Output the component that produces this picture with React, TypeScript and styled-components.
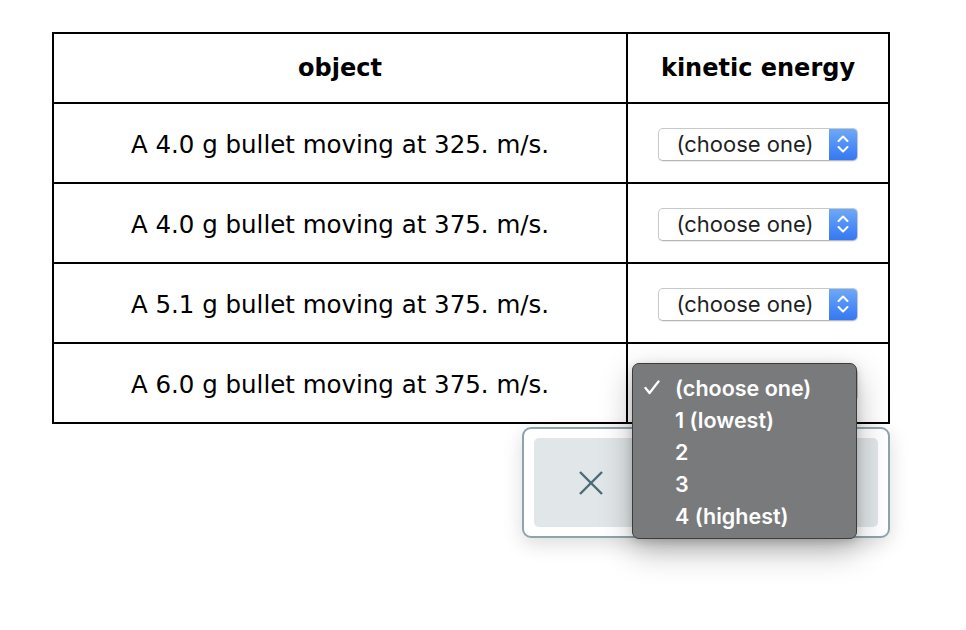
import React from "react";
import styled, { createGlobalStyle } from "styled-components";

const Global = createGlobalStyle`
  html, body { margin: 0; padding: 0; background: #ffffff; }
  body { font-family: "DejaVu Sans", Verdana, sans-serif; }
`;

const Page = styled.div`
  width: 966px;
  height: 630px;
  box-sizing: border-box;
  padding: 32px 0 0 52px;
  display: flex;
  flex-direction: column;
  align-items: flex-start;
`;

const Column = styled.div`
  display: flex;
  flex-direction: column;
  align-items: flex-end;
  width: 838px;
`;

const Table = styled.div`
  display: grid;
  grid-template-columns: 574px 262px;
  grid-template-rows: 70px repeat(4, 80px);
  border-top: 2px solid #000;
  border-left: 2px solid #000;
  width: 838px;
  box-sizing: border-box;
`;

const Cell = styled.div<{ $head?: boolean }>`
  position: relative;
  box-sizing: border-box;
  border-right: 2px solid #000;
  border-bottom: 2px solid #000;
  display: flex;
  align-items: center;
  justify-content: center;
  padding-top: ${(p) => (p.$head ? "0" : "2px")};
  font-family: "DejaVu Sans", Verdana, sans-serif;
  font-size: ${(p) => (p.$head ? "24px" : "24.5px")};
  font-weight: ${(p) => (p.$head ? 700 : 400)};
  color: #000;
`;

const SelectWrap = styled.div`
  position: relative;
  width: 200px;
  height: 33px;
`;

const SelectBox = styled.div`
  box-sizing: border-box;
  width: 200px;
  height: 33px;
  display: flex;
  align-items: stretch;
  border: 1px solid #c9c9c9;
  border-bottom-color: #b5b5b5;
  border-radius: 5px;
  background: #fff;
  box-shadow: 0 1px 1px rgba(0, 0, 0, 0.08);
  overflow: hidden;
`;

const SelectLabel = styled.div<{ $hidden?: boolean }>`
  flex: 1;
  display: flex;
  align-items: center;
  justify-content: center;
  padding-left: 2px;
  font-family: Inter, "Liberation Sans", sans-serif;
  font-size: 22px;
  color: #1f1f1f;
  visibility: ${(p) => (p.$hidden ? "hidden" : "visible")};
`;

const Stepper = styled.div`
  width: 28px;
  background: linear-gradient(#6da8f8, #3478f4);
  display: flex;
  align-items: center;
  justify-content: center;
`;

const Menu = styled.div`
  position: absolute;
  left: -26px;
  top: -5px;
  width: 225px;
  box-sizing: border-box;
  padding: 8px 0 6px;
  background: #797a7c;
  border: 1px solid #3c3c3c;
  border-radius: 7px;
  box-shadow: 0 12px 32px rgba(0, 0, 0, 0.28), 0 2px 8px rgba(0, 0, 0, 0.15);
  z-index: 10;
  display: flex;
  flex-direction: column;
`;

const MenuItem = styled.div`
  height: 32px;
  display: flex;
  align-items: center;
  font-family: Inter, "Liberation Sans", sans-serif;
  font-size: 21.5px;
  font-weight: 600;
  color: #fff;
`;

const CheckSlot = styled.div`
  width: 42px;
  display: flex;
  justify-content: flex-end;
  box-sizing: border-box;
`;

const CheckIcon = styled.svg`
  margin-right: 15px;
`;

const Card = styled.div`
  margin-top: 3px;
  width: 368px;
  height: 111px;
  box-sizing: border-box;
  border: 2px solid #8fa3ad;
  border-radius: 9px;
  background: #fff;
  padding: 9px 10px 9px 10px;
  box-shadow: 0 6px 20px rgba(0, 0, 0, 0.14);
  display: flex;
`;

const ButtonGroup = styled.div`
  flex: 1;
  display: grid;
  grid-template-columns: repeat(3, 1fr);
  background: #e1e6e9;
  border-radius: 5px;
`;

const ToolButton = styled.div`
  display: flex;
  align-items: center;
  justify-content: center;
  color: #4b6b78;
`;

const rows = [
  "A 4.0 g bullet moving at 325. m/s.",
  "A 4.0 g bullet moving at 375. m/s.",
  "A 5.1 g bullet moving at 375. m/s.",
  "A 6.0 g bullet moving at 375. m/s.",
];

const options = ["(choose one)", "1 (lowest)", "2", "3", "4 (highest)"];

function Chevrons() {
  return (
    <svg width="14" height="22" viewBox="0 0 14 22">
      <polyline points="2.5,8 7,3.5 11.5,8" fill="none" stroke="#fff" strokeWidth="2" strokeLinecap="round" strokeLinejoin="round" />
      <polyline points="2.5,14 7,18.5 11.5,14" fill="none" stroke="#fff" strokeWidth="2" strokeLinecap="round" strokeLinejoin="round" />
    </svg>
  );
}

function Select({ open }: { open?: boolean }) {
  return (
    <SelectWrap>
      <SelectBox>
        <SelectLabel $hidden={open}>(choose one)</SelectLabel>
        <Stepper>
          <Chevrons />
        </Stepper>
      </SelectBox>
      {open && (
        <Menu>
          {options.map((o, i) => (
            <MenuItem key={o}>
              <CheckSlot>
                {i === 0 && (
                  <CheckIcon width="16" height="15" viewBox="0 0 16 15">
                    <polyline points="1.5,8 5.5,13 14.5,1.5" fill="none" stroke="#fff" strokeWidth="2.3" strokeLinecap="round" strokeLinejoin="round" />
                  </CheckIcon>
                )}
              </CheckSlot>
              {o}
            </MenuItem>
          ))}
        </Menu>
      )}
    </SelectWrap>
  );
}

export default function App() {
  return (
    <>
      <Global />
      <Page>
        <Column>
          <Table>
            <Cell $head>object</Cell>
            <Cell $head>kinetic energy</Cell>
            {rows.map((r, i) => (
              <React.Fragment key={r}>
                <Cell>{r}</Cell>
                <Cell>
                  <Select open={i === 3} />
                </Cell>
              </React.Fragment>
            ))}
          </Table>
          <Card>
            <ButtonGroup>
              <ToolButton>
                <svg width="26" height="26" viewBox="0 0 26 26">
                  <line x1="2" y1="2" x2="24" y2="24" stroke="currentColor" strokeWidth="2.4" />
                  <line x1="24" y1="2" x2="2" y2="24" stroke="currentColor" strokeWidth="2.4" />
                </svg>
              </ToolButton>
              <ToolButton />
              <ToolButton />
            </ButtonGroup>
          </Card>
        </Column>
      </Page>
    </>
  );
}
